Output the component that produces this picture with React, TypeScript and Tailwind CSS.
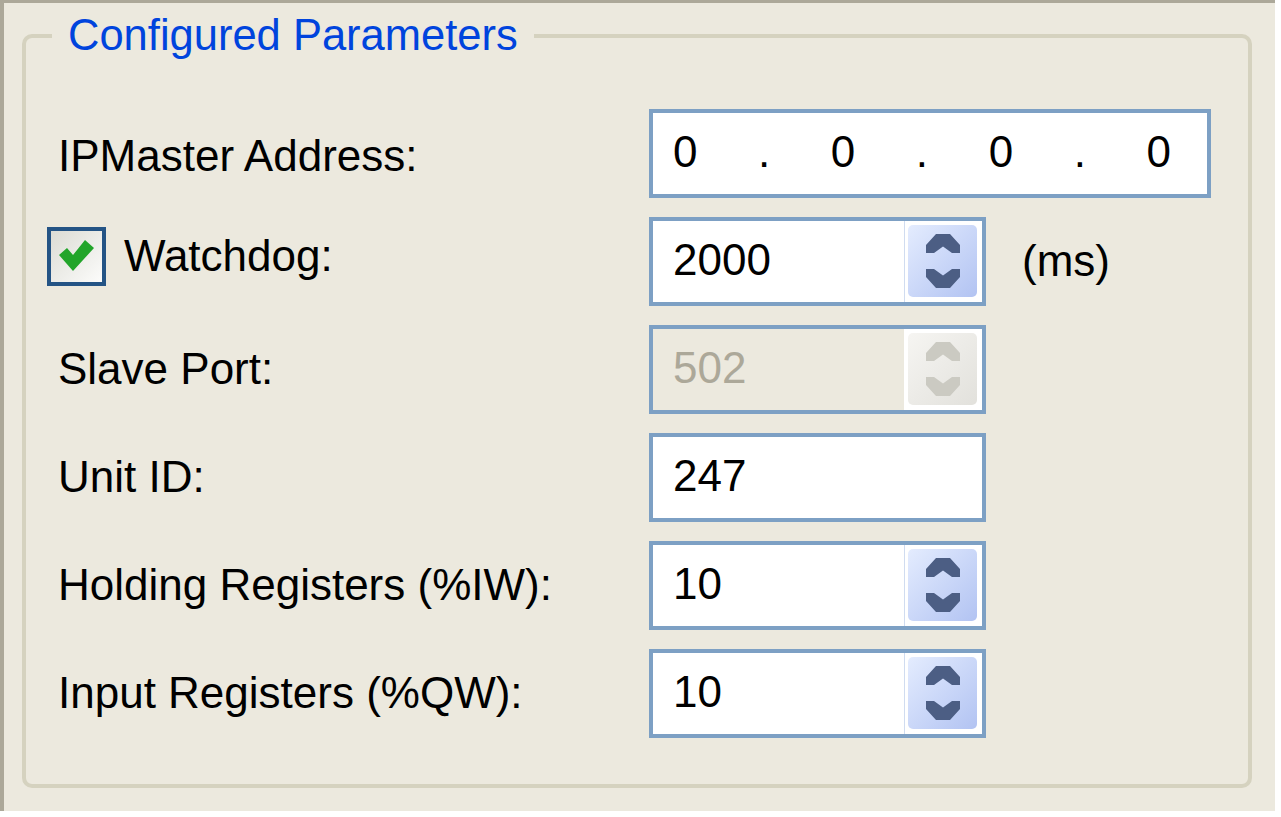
import React from 'react';

type Tone = 'active' | 'disabled';

function SpinArrows({ tone }: { tone: Tone }) {
  const fill = tone === 'active' ? '#4c5e84' : '#cbcac2';
  return (
    <svg width="34" height="54" viewBox="0 0 34 54" fill={fill}>
      <polygon points="0,11 10,0 24,0 34,11 34,19 26,19 17,12.5 8,19 0,19" />
      <polygon points="0,43 10,54 24,54 34,43 34,35 26,35 17,41.5 8,35 0,35" />
    </svg>
  );
}

function SpinField({ value, tone = 'active' }: { value: string; tone?: Tone }) {
  const off = tone === 'disabled';
  return (
    <div className="w-[337px] h-full flex border-4 border-[#7da0c4]">
      <div
        className={
          off
            ? 'flex-1 flex items-center pl-[20px] pb-[3px] bg-[#ece9de] text-[#aca899]'
            : 'flex-1 flex items-center pl-[20px] pb-[3px] bg-white'
        }
      >
        {value}
      </div>
      <div
        className={
          off
            ? 'w-[78px] bg-white border-l border-white pl-[3px] pr-[5px] pt-[4px] pb-[5px]'
            : 'w-[78px] bg-white border-l border-[#d0dcf0] pl-[3px] pr-[5px] pt-[4px] pb-[5px]'
        }
      >
        <div
          className={
            off
              ? 'h-full rounded-[5px] flex items-center justify-center bg-linear-to-br from-[#f6f5f2] to-[#e2e1dc]'
              : 'h-full rounded-[5px] flex items-center justify-center bg-linear-to-br from-[#e4ecfe] to-[#b2c3f2]'
          }
        >
          <SpinArrows tone={tone} />
        </div>
      </div>
    </div>
  );
}

function Checkbox() {
  return (
    <div className="w-[59px] h-[59px] border-4 border-[#245485] bg-linear-to-br from-[#dcdcd4] to-[#fcfcfb] flex items-center justify-center">
      <svg width="51" height="51" viewBox="0 0 51 51">
        <polygon points="8,24 16,17 22,24 34,9 43,17 22,40" fill="#22a52a" />
      </svg>
    </div>
  );
}

function Row({ label, children }: { label: React.ReactNode; children: React.ReactNode }) {
  return (
    <div className="flex items-center h-[89px]">
      <div className="w-[591px] shrink-0">{label}</div>
      {children}
    </div>
  );
}

export default function App() {
  return (
    <div className="w-[1281px] h-[817px] bg-white font-['Liberation_Sans',Arial,sans-serif] text-[44px] leading-none text-black">
      <div className="w-[1275px] h-[811px] bg-[#ece9de] border-t-[3px] border-l-4 border-[#aca899] pt-[11px] pl-[18px]">
        <fieldset className="w-[1230px] h-[774px] border-4 border-[#d5d2bf] rounded-[10px]">
          <legend className="ml-[26px] px-4 text-[43.5px] text-[#0044dd]">Configured Parameters</legend>

          <div className="flex flex-col gap-[19px] pt-[51px] pl-[32px]">
            <Row label={<div className="pt-[6px]">IPMaster Address:</div>}>
              <div className="w-[562px] h-full border-4 border-[#7da0c4] bg-white flex items-center justify-between pl-[20px] pr-[36px] pb-[3px]">
                <span>0</span>
                <span>.</span>
                <span>0</span>
                <span>.</span>
                <span>0</span>
                <span>.</span>
                <span>0</span>
              </div>
            </Row>

            <Row
              label={
                <div className="flex items-center gap-[18px] -ml-[11px] pb-[10px]">
                  <Checkbox />
                  <span>Watchdog:</span>
                </div>
              }
            >
              <SpinField value="2000" />
              <span className="ml-[36px]">(ms)</span>
            </Row>

            <Row label={<div>Slave Port:</div>}>
              <SpinField value="502" tone="disabled" />
            </Row>

            <Row label={<div>Unit ID:</div>}>
              <div className="w-[337px] h-full border-4 border-[#7da0c4] bg-white flex items-center pl-[20px] pb-[3px]">
                247
              </div>
            </Row>

            <Row label={<div>Holding Registers (%IW):</div>}>
              <SpinField value="10" />
            </Row>

            <Row label={<div>Input Registers (%QW):</div>}>
              <SpinField value="10" />
            </Row>
          </div>
        </fieldset>
      </div>
    </div>
  );
}
